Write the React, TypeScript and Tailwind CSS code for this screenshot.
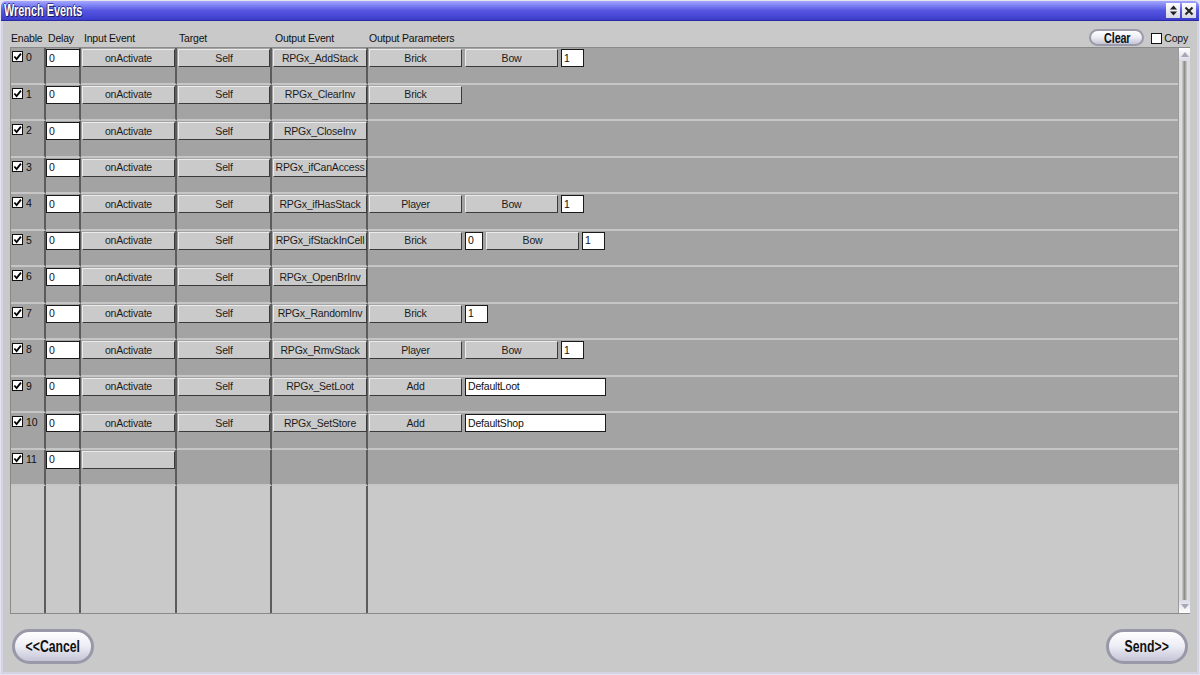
import React from "react";

type Param =
  | { kind: "btn"; label: string }
  | { kind: "num"; value: string; w: string }
  | { kind: "text"; value: string };

interface EventRow {
  output?: string;
  params: Param[];
}

const rows: EventRow[] = [
  { output: "RPGx_AddStack", params: [{ kind: "btn", label: "Brick" }, { kind: "btn", label: "Bow" }, { kind: "num", value: "1", w: "w-[23px]" }] },
  { output: "RPGx_ClearInv", params: [{ kind: "btn", label: "Brick" }] },
  { output: "RPGx_CloseInv", params: [] },
  { output: "RPGx_ifCanAccess", params: [] },
  { output: "RPGx_ifHasStack", params: [{ kind: "btn", label: "Player" }, { kind: "btn", label: "Bow" }, { kind: "num", value: "1", w: "w-[23px]" }] },
  { output: "RPGx_ifStackInCell", params: [{ kind: "btn", label: "Brick" }, { kind: "num", value: "0", w: "w-[18px]" }, { kind: "btn", label: "Bow" }, { kind: "num", value: "1", w: "w-[23px]" }] },
  { output: "RPGx_OpenBrInv", params: [] },
  { output: "RPGx_RandomInv", params: [{ kind: "btn", label: "Brick" }, { kind: "num", value: "1", w: "w-[23px]" }] },
  { output: "RPGx_RmvStack", params: [{ kind: "btn", label: "Player" }, { kind: "btn", label: "Bow" }, { kind: "num", value: "1", w: "w-[23px]" }] },
  { output: "RPGx_SetLoot", params: [{ kind: "btn", label: "Add" }, { kind: "text", value: "DefaultLoot" }] },
  { output: "RPGx_SetStore", params: [{ kind: "btn", label: "Add" }, { kind: "text", value: "DefaultShop" }] },
];

const ui = { fontFamily: '"Liberation Sans", Arial, sans-serif' };
const bold = { fontFamily: '"Liberation Sans", "DejaVu Sans", sans-serif' };

function GuiButton({ label, w = "w-[93px]" }: { label?: string; w?: string }) {
  return (
    <div className={`flex h-[18px] ${w} shrink-0 items-center justify-center overflow-hidden whitespace-nowrap border border-t-[#ececec] border-l-[#ececec] border-r-[#3a3a3a] border-b-[#3a3a3a] bg-[#cacaca] text-[10.5px] leading-none tracking-[-0.2px] text-[#1c1c1c]`}>
      {label}
    </div>
  );
}

function GuiInput({ value, w }: { value: string; w: string }) {
  return (
    <div className={`flex h-[18px] ${w} shrink-0 items-center border border-[#1a1a1a] bg-white pl-[2px] text-[10.5px] leading-none tracking-[-0.2px] text-[#111]`}>
      {value}
    </div>
  );
}

function Check() {
  return (
    <span className="flex h-[11px] w-[11px] shrink-0 items-center justify-center border border-[#111] bg-white">
      <svg viewBox="0 0 10 10" className="h-[9px] w-[9px]">
        <path d="M1.5 5 L4 7.8 L8.8 1.8" fill="none" stroke="#000" strokeWidth="2" />
      </svg>
    </span>
  );
}

function PillButton({ label, className = "", text = "" }: { label: string; className?: string; text?: string }) {
  return (
    <div className={`flex items-center justify-center rounded-full bg-gradient-to-b from-white via-[#ececf4] to-[#c4c4d6] ${className}`}>
      <span className={`inline-block scale-x-[0.72] whitespace-nowrap font-bold text-[#111] ${text}`} style={bold}>
        {label}
      </span>
    </div>
  );
}

const cell = "shrink-0 border-r-2 border-r-[#5c5c5c]";

function Row({ i, row }: { i: number; row?: EventRow }) {
  const sep = "border-b-2 border-b-[#c6c6c6]";
  return (
    <div className="flex h-[36.5px] bg-[#a3a3a3]">
      <div className={`${cell} ${sep} flex w-[35px] items-start gap-[3px] pl-[1px] pt-[3px]`}>
        <Check />
        <span className="text-[10.5px] leading-[12px] text-[#111]">{i}</span>
      </div>
      <div className={`${cell} ${sep} w-[35px] pt-px`}>
        <GuiInput value="0" w="w-[34px]" />
      </div>
      <div className={`${cell} ${sep} w-[96px] pl-px pt-px`}>
        <GuiButton label={row ? "onActivate" : ""} />
      </div>
      <div className={`${cell} ${sep} w-[95px] pl-px pt-px`}>
        {row && <GuiButton label="Self" w="w-[92px]" />}
      </div>
      <div className={`${cell} ${sep} w-[96px] pl-px pt-px`}>
        {row && <GuiButton label={row.output} w="w-[94px]" />}
      </div>
      <div className={`${sep} flex flex-1 gap-[3px] pl-px pt-px`}>
        {row?.params.map((p, k) =>
          p.kind === "btn" ? (
            <GuiButton key={k} label={p.label} />
          ) : p.kind === "num" ? (
            <GuiInput key={k} value={p.value} w={p.w} />
          ) : (
            <GuiInput key={k} value={p.value} w="w-[141px]" />
          )
        )}
      </div>
    </div>
  );
}

export default function App() {
  return (
    <div className="flex h-[675px] w-[1200px] flex-col overflow-hidden bg-[#e4e4f0] p-px" style={ui}>
      {/* title bar */}
      <div className="flex h-[20px] shrink-0 items-center rounded-t-[5px] border-b border-[#2a2aa0] bg-gradient-to-b from-[#a6a6ff] via-[#5656e2] to-[#3c3ccc] pl-[3px] pr-[3px]">
        <span
          className="inline-block origin-left scale-x-[0.68] whitespace-nowrap text-[16px] font-bold text-white [text-shadow:1px_1px_0_#16165e,-1px_0_0_#22227a,0_-1px_0_#3030a0]"
          style={bold}
        >
          Wrench Events
        </span>
        <div className="ml-auto flex gap-[2px]">
          <div className="flex h-[15px] w-[14px] items-center justify-center bg-gradient-to-b from-white to-[#d8d8e4]">
            <svg viewBox="0 0 10 12" className="h-[11px] w-[9px]">
              <path d="M5 0.5 L9 5 L1 5 Z M5 11.5 L9 7 L1 7 Z" fill="#222" />
            </svg>
          </div>
          <div className="flex h-[15px] w-[14px] items-center justify-center bg-gradient-to-b from-white to-[#d8d8e4]">
            <svg viewBox="0 0 10 10" className="h-[10px] w-[10px]">
              <path d="M1.5 1.5 L8.5 8.5 M8.5 1.5 L1.5 8.5" stroke="#222" strokeWidth="2" />
            </svg>
          </div>
        </div>
      </div>

      {/* body */}
      <div className="flex flex-1 flex-col border-2 border-t-0 border-[#d4d4e4] bg-[#c9c9c9] px-[7px] pb-[6px]">
        <div className="flex h-[26px] shrink-0 items-end pb-[4px] text-[10.5px] leading-none tracking-[-0.2px] text-[#111]">
          <span className="w-[36px] pl-px">Enable</span>
          <span className="w-[36px] pl-[2px]">Delay</span>
          <span className="w-[95px] pl-[2px]">Input Event</span>
          <span className="w-[96px] pl-[2px]">Target</span>
          <span className="w-[96px] pl-[2px]">Output Event</span>
          <span>Output Parameters</span>
          <div className="mb-[-3px] ml-auto mr-[7px] flex items-center">
            <PillButton label="Clear" className="h-[17px] w-[55px] border-2 border-[#9a9aaa]" text="text-[15px] leading-none" />
          </div>
          <div className="mb-[-1px] mr-[2px] flex items-center gap-[2px]">
            <span className="h-[11px] w-[11px] border border-[#111] bg-white" />
            <span>Copy</span>
          </div>
        </div>

        <div className="flex h-[567px] shrink-0 border border-r-0 border-[#8a8a8a]">
          <div className="flex flex-1 flex-col">
            {rows.map((r, i) => (
              <Row key={i} i={i} row={r} />
            ))}
            <Row i={11} />
            <div className="flex flex-1 bg-[#c9c9c9]">
              <div className={`${cell} w-[35px]`} />
              <div className={`${cell} w-[35px]`} />
              <div className={`${cell} w-[96px]`} />
              <div className={`${cell} w-[95px]`} />
              <div className={`${cell} w-[96px]`} />
              <div className="flex-1" />
            </div>
          </div>
          {/* scrollbar */}
          <div className="flex w-[12px] shrink-0 flex-col border-l border-[#9a9a9a] bg-[#dcdcdc]">
            <div className="flex h-[13px] items-center justify-center bg-gradient-to-b from-white to-[#dadae6]">
              <svg viewBox="0 0 8 5" className="h-[5px] w-[8px]">
                <path d="M4 0 L8 5 L0 5 Z" fill="#a8a8b4" />
              </svg>
            </div>
            <div className="mx-[2px] flex-1 bg-gradient-to-r from-[#eaeaea] via-[#8e8e8e] to-[#eaeaea]" />
            <div className="flex h-[13px] items-center justify-center bg-gradient-to-b from-[#dadae6] to-white">
              <svg viewBox="0 0 8 5" className="h-[5px] w-[8px]">
                <path d="M0 0 L8 0 L4 5 Z" fill="#a8a8b4" />
              </svg>
            </div>
          </div>
        </div>

        <div className="flex flex-1 items-end justify-between px-[2px] pb-[2px]">
          <PillButton label="<<Cancel" className="h-[35px] w-[82px] border-[3px] border-[#9898a8]" text="text-[17px]" />
          <PillButton label="Send>>" className="h-[35px] w-[82px] border-[3px] border-[#9898a8]" text="text-[17px]" />
        </div>
      </div>
    </div>
  );
}
